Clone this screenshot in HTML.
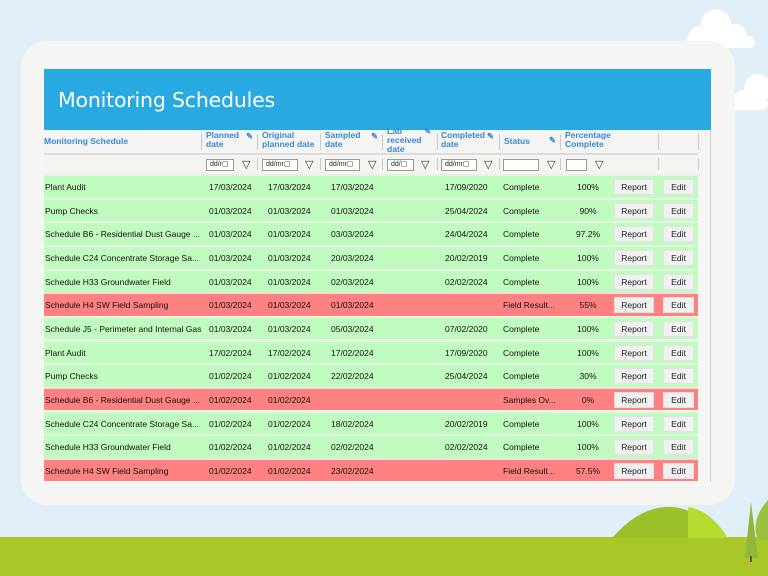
<!DOCTYPE html>
<html><head><meta charset="utf-8"><style>
*{margin:0;padding:0;box-sizing:border-box}
body{width:768px;height:576px;overflow:hidden;background:#dfeef7;font-family:"Liberation Sans",Arial,sans-serif;position:relative}
#grass{position:absolute;left:0;top:537px;width:768px;height:39px;background:#a9c728}
#card{position:absolute;left:21px;top:41px;width:714px;height:464px;background:#f5f6f3;border-radius:26px}
#bar{position:absolute;left:44px;top:69px;width:667px;height:61px;background:#28a9e2}
#bar span{position:absolute;left:14px;top:19px;color:#fff;font-size:20.5px;font-family:"DejaVu Sans","Liberation Sans",sans-serif;letter-spacing:-0.2px}
.h{position:absolute;top:131px;height:22px;color:#3b86d6;font-size:8.5px;line-height:9px;font-weight:bold}
.sep{position:absolute;width:1px;background:#c8cbcc}
.row{position:absolute;left:44px;width:654px;height:23.6px;font-size:8.5px;color:#111;border-top:2px solid #e6f4e6}
.g{background:#c0fcc0}.r{background:#ff8181;border-top-color:#f3dede}
.row div{position:absolute;top:6px;white-space:nowrap}
.btn{position:absolute;top:3px!important;height:16px;background:#f1f1f1;border:1px solid #e2e2e2;text-align:center;line-height:14px;font-size:8.5px;color:#222}
.inp{position:absolute;top:159px;height:12px;background:#fff;border:1px solid #9a9a9a;font-size:7px;line-height:10px;padding-left:3px;color:#222}
.fil{position:absolute;top:158px;font-size:11px;color:#333}
</style></head><body>
<svg style="position:absolute;left:0;top:0" width="768" height="140">
<g fill="#fff"><circle cx="716" cy="24" r="15"/><circle cx="700" cy="38" r="12"/><circle cx="735" cy="36" r="12"/><rect x="685" y="36" width="70" height="12" rx="6"/>
<circle cx="758" cy="88" r="14"/><circle cx="744" cy="100" r="10"/><rect x="728" y="98" width="40" height="12" rx="6"/></g></svg>
<div id="grass"></div>
<svg style="position:absolute;left:600px;top:500px" width="168" height="76"><path d="M12 38 Q40 6 70 7 Q95 7 128 38 Z" fill="#9cc02a"/><path d="M88 7 Q110 10 128 38 L88 38Z" fill="#b6db2e"/><path d="M145 58 L151 2 L158 58Z" fill="#8fb73a"/><path d="M158 40 Q150 20 168 0 L168 40Z" fill="#9bc23e"/><rect x="150" y="56" width="2" height="6" fill="#7a4a20"/></svg>
<div id="card"></div>
<div id="bar"><span>Monitoring Schedules</span></div>
<div style="position:absolute;left:44px;top:130px;width:667px;height:48px;background:#f4f5f3"></div>
<div style="position:absolute;left:44px;top:153px;width:654px;height:2px;background:#dcdcdc"></div>
<div style="position:absolute;left:710px;top:130px;width:1px;height:352px;background:#ccc"></div>
<div class="h" style="left:44px;top:137px">Monitoring Schedule</div>
<div class="h" style="left:206px">Planned<br>date</div>
<div class="h" style="left:262px">Original<br>planned date</div>
<div class="h" style="left:325px">Sampled<br>date</div>
<div class="h" style="left:387px;top:127px">Lab<br>received<br>date</div>
<div class="h" style="left:441px">Completed<br>date</div>
<div class="h" style="left:504px;top:137px">Status</div>
<div class="h" style="left:565px">Percentage<br>Complete</div>
<div class="h" style="left:246px;top:132px">✎</div><div class="h" style="left:371px;top:132px">✎</div><div class="h" style="left:424px;top:127px">✎</div><div class="h" style="left:487px;top:132px">✎</div><div class="h" style="left:549px;top:136px">✎</div>
<div class="sep" style="left:201px;top:134px;height:16px"></div><div class="sep" style="left:257px;top:134px;height:16px"></div><div class="sep" style="left:320px;top:134px;height:16px"></div><div class="sep" style="left:382px;top:134px;height:16px"></div><div class="sep" style="left:437px;top:134px;height:16px"></div><div class="sep" style="left:499px;top:134px;height:16px"></div><div class="sep" style="left:560px;top:134px;height:16px"></div><div class="sep" style="left:658px;top:134px;height:16px"></div><div class="sep" style="left:698px;top:134px;height:16px"></div>
<div class="sep" style="left:257px;top:158px;height:12px"></div><div class="sep" style="left:320px;top:158px;height:12px"></div><div class="sep" style="left:382px;top:158px;height:12px"></div><div class="sep" style="left:437px;top:158px;height:12px"></div><div class="sep" style="left:499px;top:158px;height:12px"></div><div class="sep" style="left:560px;top:158px;height:12px"></div><div class="sep" style="left:658px;top:158px;height:12px"></div><div class="sep" style="left:698px;top:158px;height:12px"></div>
<div class="inp" style="left:206px;width:28px">dd/r▢</div><div class="inp" style="left:262px;width:36px">dd/mr▢</div><div class="inp" style="left:325px;width:35px">dd/mr▢</div><div class="inp" style="left:387px;width:27px">dd/▢</div><div class="inp" style="left:441px;width:36px">dd/mr▢</div><div class="inp" style="left:503px;width:36px"></div><div class="inp" style="left:566px;width:21px"></div>
<div class="fil" style="left:242px">▽</div><div class="fil" style="left:305px">▽</div><div class="fil" style="left:368px">▽</div><div class="fil" style="left:421px">▽</div><div class="fil" style="left:484px">▽</div><div class="fil" style="left:547px">▽</div><div class="fil" style="left:595px">▽</div>
<div id="rows"></div>
<script>
var d=[["g","Plant Audit","17/03/2024","17/03/2024","17/03/2024","17/09/2020","Complete","100%"],
["g","Pump Checks","01/03/2024","01/03/2024","01/03/2024","25/04/2024","Complete","90%"],
["g","Schedule B6 - Residential Dust Gauge ...","01/03/2024","01/03/2024","03/03/2024","24/04/2024","Complete","97.2%"],
["g","Schedule C24 Concentrate Storage Sa...","01/03/2024","01/03/2024","20/03/2024","20/02/2019","Complete","100%"],
["g","Schedule H33 Groundwater Field","01/03/2024","01/03/2024","02/03/2024","02/02/2024","Complete","100%"],
["r","Schedule H4 SW Field Sampling","01/03/2024","01/03/2024","01/03/2024","","Field Result...","55%"],
["g","Schedule J5 - Perimeter and Internal Gas","01/03/2024","01/03/2024","05/03/2024","07/02/2020","Complete","100%"],
["g","Plant Audit","17/02/2024","17/02/2024","17/02/2024","17/09/2020","Complete","100%"],
["g","Pump Checks","01/02/2024","01/02/2024","22/02/2024","25/04/2024","Complete","30%"],
["r","Schedule B6 - Residential Dust Gauge ...","01/02/2024","01/02/2024","","","Samples Ov...","0%"],
["g","Schedule C24 Concentrate Storage Sa...","01/02/2024","01/02/2024","18/02/2024","20/02/2019","Complete","100%"],
["g","Schedule H33 Groundwater Field","01/02/2024","01/02/2024","02/02/2024","02/02/2024","Complete","100%"],
["r","Schedule H4 SW Field Sampling","01/02/2024","01/02/2024","23/02/2024","","Field Result...","57.5%"]];
var h="";d.forEach(function(r,i){var t=174+i*23.65;
h+='<div class="row '+r[0]+'" style="top:'+t+'px"><div style="left:1px">'+r[1]+'</div><div style="left:165px">'+r[2]+'</div><div style="left:224px">'+r[3]+'</div><div style="left:287px">'+r[4]+'</div><div style="left:401px">'+r[5]+'</div><div style="left:459px">'+r[6]+'</div><div style="left:531px;width:26px;text-align:center">'+r[7]+'</div><div class="btn" style="left:570px;width:40px">Report</div><div class="btn" style="left:619px;width:31px">Edit</div></div>';});
document.getElementById("rows").innerHTML=h;
</script>
</body></html>
